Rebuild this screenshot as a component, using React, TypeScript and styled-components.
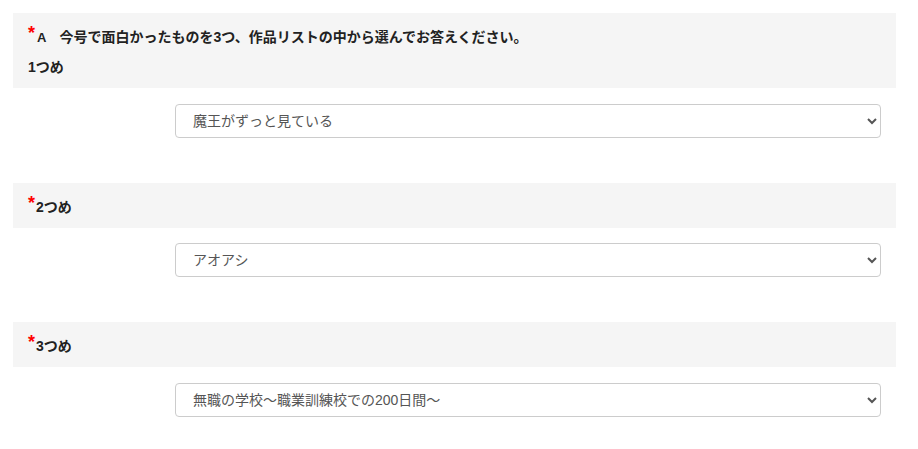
import React from "react";
import styled, { createGlobalStyle } from "styled-components";

const GlobalStyle = createGlobalStyle`
  html, body { margin: 0; padding: 0; background: #ffffff; }
  body {
    font-family: "Liberation Sans", "Noto Sans CJK JP", sans-serif;
    color: #333333;
  }
`;

const Page = styled.div`
  padding: 13px 22px 0 13px;
  display: flex;
  flex-direction: column;
`;

const Question = styled.section`
  display: flex;
  flex-direction: column;
  margin-bottom: 45px;
`;

const Header = styled.div`
  background: #f5f5f5;
  padding: 14px 15px 10px;
  display: flex;
  flex-direction: column;
  gap: 9px;
`;

const Line = styled.div`
  font-size: 14px;
  line-height: 21px;
  font-weight: 700;
  color: #222222;
  white-space: nowrap;
`;

const Required = styled.span`
  color: #ff0000;
  font-size: 18px;
  font-weight: 700;
  line-height: 10px;
  vertical-align: 3px;
  margin-right: 1px;
`;

const Prefix = styled.span`
  display: inline-block;
  margin-left: 1px;
  margin-right: 13px;
  font-size: 13px;
`;

const Row = styled.div`
  display: grid;
  grid-template-columns: 162px 1fr;
  padding: 15.5px 15px 0 0;
`;

const Select = styled.select`
  grid-column: 2;
  height: 34px;
  width: 100%;
  box-sizing: border-box;
  border: 1px solid #cccccc;
  border-radius: 4px;
  background: #ffffff;
  color: #555555;
  font-family: "Liberation Sans", "Noto Sans CJK JP", sans-serif;
  font-size: 14px;
  padding: 0 6px 0 13px;
  outline: none;
`;

const questions = [
  { id: 1, value: "魔王がずっと見ている" },
  { id: 2, value: "アオアシ" },
  { id: 3, value: "無職の学校～職業訓練校での200日間～" },
];

export default function App() {
  return (
    <>
      <GlobalStyle />
      <Page>
        {questions.map((q) => (
          <Question key={q.id}>
            <Header>
              {q.id === 1 ? (
                <>
                  <Line>
                    <Required>*</Required>
                    <Prefix>A</Prefix>
                    今号で面白かったものを3つ、作品リストの中から選んでお答えください。
                  </Line>
                  <Line>1つめ</Line>
                </>
              ) : (
                <Line>
                  <Required>*</Required>
                  {q.id}つめ
                </Line>
              )}
            </Header>
            <Row>
              <Select defaultValue={q.value}>
                <option value={q.value}>{q.value}</option>
              </Select>
            </Row>
          </Question>
        ))}
      </Page>
    </>
  );
}
